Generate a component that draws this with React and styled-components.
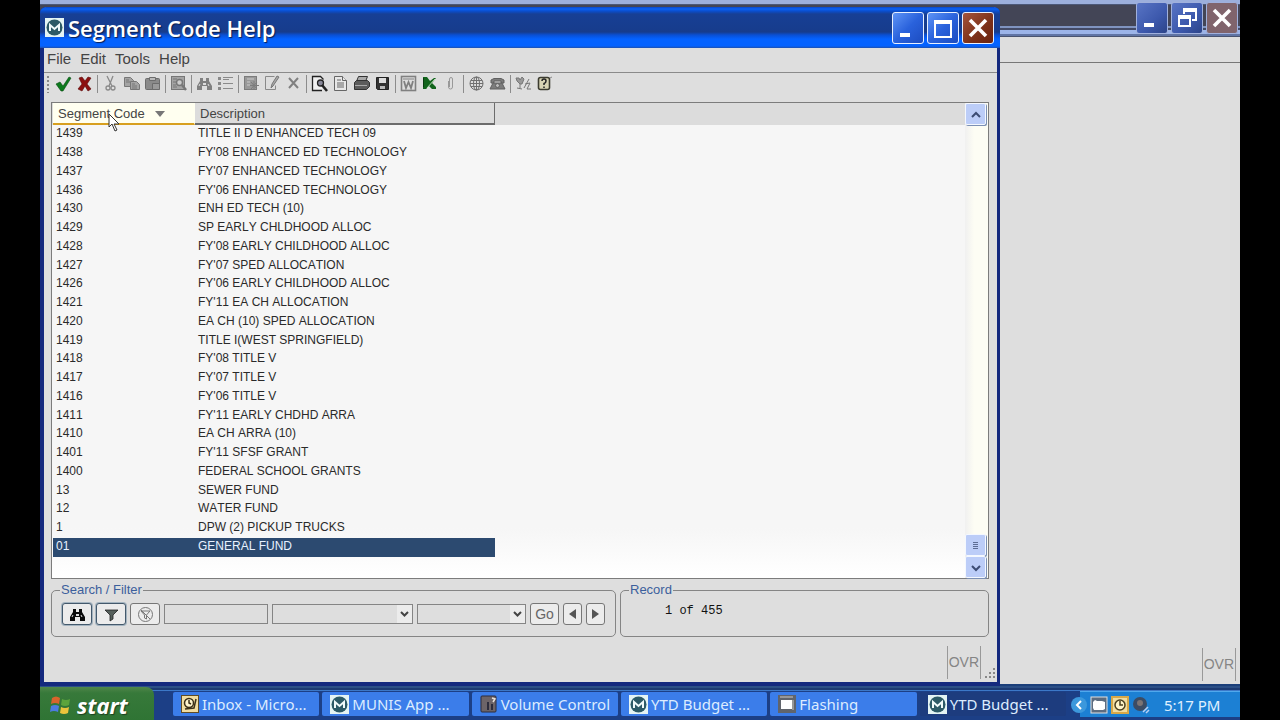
import { useState } from "react";
import styled, { createGlobalStyle } from "styled-components";

const GlobalStyle = createGlobalStyle`
    * {
      box-sizing: border-box;
    }
    body {
      margin: 0;
      background-color: #000;
      font-family: "Liberation Sans", Arial, sans-serif;
      overflow: hidden;
    }
    button, input, select {
      font-family: inherit;
      margin: 0;
      padding: 0;
    }
  `;

const Screen = styled.div`
    height: 100vh;
    margin: 0 40px;
    display: flex;
    flex-direction: column;
    background-color: #1b3f7a;
  `;

const Desktop = styled.main`
    flex: 1;
    min-height: 0;
    position: relative;
  `;

/* window behind the dialog */

const BackWindow = styled.section`
    position: absolute;
    inset: 0 0 2px 0;
    display: flex;
    flex-direction: column;
    background-color: #dedede;
  `;

const BackTitle = styled.header`
    height: 37px;
    display: flex;
    justify-content: flex-end;
    gap: 3px;
    padding: 2px 2px 0 0;
    border-bottom: 1px solid #4a5470;
    background: linear-gradient(#9cafdc 0 4px, #4c5878 4px 5px, #434556 5px 26px, #7f93c0 26px 28px, #434a66 28px 30px, #9cb4e8 30px 34px, #6074a4 34px);
  `;

const BackMenu = styled.div`
    height: 26px;
    border-bottom: 1px solid #777;
  `;

const BackBody = styled.div`
    flex: 1;
    display: flex;
    align-items: flex-end;
    justify-content: flex-end;
    padding: 0 4px 3px 0;
  `;

/* dialog */

const Dialog = styled.section`
    position: absolute;
    top: 7px;
    bottom: 0;
    left: 0;
    width: 80%;
    display: flex;
    flex-direction: column;
    background-color: #dedede;
    border: solid #14297e;
    border-width: 0 3px 4px 4px;
    border-radius: 6px 6px 0 0;
  `;

const DialogTitle = styled.header`
    height: 41px;
    flex: none;
    display: flex;
    align-items: center;
    gap: 4px;
    margin: 0 -3px 0 -4px;
    padding: 0 6px 0 5px;
    border-radius: 6px 6px 0 0;
    background: linear-gradient(#0a46c8 0, #0a62f4 2px, #0a4fd0 4px, #173f95 7px, #173c8c 25px, #0a50d4 28px, #0462ff 32px, #0462ff 39px, #1e4fae 41px);
  `;

const TitleText = styled.h1`
    flex: 1;
    margin: 0;
    font-family: "Open Sans", "Noto Sans", sans-serif;
    font-size: 22px;
    line-height: 30px;
    font-weight: 600;
    color: #fff;
    text-shadow: 1px 1px 1px #0a1e50;
  `;

const WindowButtons = styled.div`
    display: flex;
    gap: 3px;
  `;

const buttonFills = {
  blue: "linear-gradient(135deg, #5e94f6, #2a62dc 50%, #1c4cc0)",
  red: "linear-gradient(135deg, #a4543c, #7c3018 60%, #6a2410)",
  dimBlue: "linear-gradient(135deg, #5874c4, #3c58ac 60%, #2c4488)",
  dimRed: "#80646c",
};

const WindowButton = styled.button`
    width: 32px;
    height: 32px;
    display: flex;
    align-items: center;
    justify-content: center;
    border: 1px solid ${(props) => (props.$dim ? "#a0b0dc" : "#e8f0ff")};
    border-radius: 3px;
    background: ${(props) => buttonFills[props.$fill]};
  `;

const MenuBar = styled.nav`
    height: 25px;
    flex: none;
    display: flex;
    align-items: center;
    gap: 9px;
    padding: 0 0 2px 3px;
    border-bottom: 1px solid #8a8a8a;
  `;

const MenuItem = styled.button`
    border: none;
    background: none;
    font-size: 15px;
    line-height: 20px;
    color: #444;
  `;

const Toolbar = styled.div`
    height: 29px;
    flex: none;
    display: flex;
    align-items: flex-start;
    gap: 4px;
    padding: 2px 0 0 2px;
  `;

const Tool = styled.button`
    width: 17px;
    height: 17px;
    display: flex;
    border: none;
    background: none;
  `;

const Separator = styled.span`
    width: 1px;
    height: 18px;
    background-color: #8c8c8c;
  `;

const Grip = styled.span`
    width: 5px;
    height: 18px;
    background: radial-gradient(circle, #888 1px, transparent 1px) 0 0 / 4px 4px;
  `;

const Frame = styled.div`
    flex: 1;
    min-height: 0;
    display: flex;
    margin: 0 8px 0 7px;
    border: 1px solid #7c7c7c;
    background: linear-gradient(#dcdcdc 0 22px, #f6f6f6 22px calc(100% - 50px), #fff 100%);
  `;

const TableArea = styled.div`
    flex: 1;
    padding-left: 1px;
  `;

const Table = styled.table`
    width: 442px;
    table-layout: fixed;
    border-collapse: separate;
    border-spacing: 0;
  `;

const HeadCell = styled.th`
    width: ${(props) => props.$width};
    height: 22px;
    padding: 2px 0 0 5px;
    text-align: left;
    background-color: ${(props) => (props.$sorted ? "#fffff0" : "#dcdcdc")};
    border-bottom: 2px solid ${(props) => (props.$sorted ? "#d8a020" : "#6c6c6c")};
    border-right: 1px solid ${(props) => (props.$sorted ? "#fffff0" : "#6c6c6c")};
  `;

const SortButton = styled.button`
    display: flex;
    align-items: center;
    gap: 10px;
    border: none;
    background: none;
    font-size: 13px;
    line-height: 18px;
    font-kerning: none;
    color: #444;
  `;

const Row = styled.tr`
    color: ${(props) => (props.$selected ? "#e8f2ff" : "#2a2a2a")};
    background-color: ${(props) => (props.$selected ? "#2c4a70" : "transparent")};
    &:nth-child(4n) td {
      height: 18px;
    }
  `;

const Cell = styled.td`
    height: 19px;
    padding: 0 0 0 3px;
    vertical-align: top;
    font-size: 12px;
    line-height: 17px;
    font-kerning: none;
    white-space: nowrap;
  `;

const ScrollBar = styled.div`
    width: 23px;
    display: flex;
    flex-direction: column;
    background: linear-gradient(90deg, #f0f0f0, #fdfdf4 40%, #fdfdf4);
  `;

const ScrollTrack = styled.div`
    flex: 1;
  `;

const ScrollButton = styled.button`
    width: 21px;
    height: 22px;
    display: flex;
    align-items: center;
    justify-content: center;
    border: 1px solid #f4f8ff;
    border-radius: 2px;
    background-color: #bccdf8;
    box-shadow: 1px 1px 0 #7c90b4;
  `;

const Groups = styled.div`
    display: flex;
    gap: 4px;
    margin: 4px 8px 0 7px;
  `;

const Group = styled.fieldset`
    flex: ${(props) => (props.$grow ? "1" : "0 0 565px")};
    min-width: 0;
    height: 54px;
    margin: 0;
    padding: 0 10px;
    border: 1px solid #858585;
    border-radius: 5px;
  `;

const Legend = styled.legend`
    margin-left: -2px;
    padding: 0 1px;
    font-size: 13px;
    line-height: 14px;
    color: #3c5f9c;
  `;

const Controls = styled.div`
    display: flex;
    align-items: center;
    gap: 4px;
    height: 34px;
  `;

const PushButton = styled.button`
    width: ${(props) => props.$width};
    height: 22px;
    display: flex;
    align-items: center;
    justify-content: center;
    border: 1px solid ${(props) => (props.$strong ? "#44596c" : "#777")};
    border-radius: 3px;
    background-color: #ececec;
    box-shadow: ${(props) => (props.$strong ? "0 0 0 1px #a4b4c0" : "none")};
    font-size: 14px;
    color: #666;
  `;

const TextBox = styled.input`
    width: 104px;
    height: 20px;
    border: 1px solid #858585;
    background-color: #dedede;
  `;

const SelectWrap = styled.label`
    width: ${(props) => props.$width};
    height: 20px;
    display: flex;
    border: 1px solid #858585;
    background: linear-gradient(90deg, transparent calc(100% - 15px), #ececec 0);
  `;

const Select = styled.select`
    width: 100%;
    appearance: none;
    border: none;
    background: url("data:image/svg+xml,%3Csvg xmlns='http://www.w3.org/2000/svg' width='9' height='6'%3E%3Cpath d='M1 1l3.500 3.500L8 1' fill='none' stroke='%23444' stroke-width='2'/%3E%3C/svg%3E") no-repeat right 3px center;
  `;

const RecordText = styled.output`
    display: block;
    padding-left: 34px;
    font-family: "Liberation Mono", "Courier New", monospace;
    font-size: 12px;
    line-height: 28px;
    color: #111;
  `;

const StatusBar = styled.footer`
    height: 45px;
    flex: none;
    display: flex;
    align-items: flex-end;
    justify-content: flex-end;
    gap: 3px;
    padding: 0 1px 3px 0;
  `;

const StatusCell = styled.span`
    height: 33px;
    padding: 0 1px;
    border: solid #999;
    border-width: 0 1px;
    font-size: 14px;
    line-height: 33px;
    color: #858585;
  `;

const Pointer = styled.svg`
    position: absolute;
    left: 68px;
    top: 113px;
    pointer-events: none;
  `;

/* task bar */

const TaskBar = styled.footer`
    height: 34px;
    flex: none;
    display: flex;
    align-items: stretch;
    background: linear-gradient(#2b4f86 0 2px, #1c3a72 2px 4px, #3c78c8 4px 5px, #1c3f86 5px);
  `;

const StartButton = styled.button`
    width: 114px;
    display: flex;
    align-items: center;
    gap: 5px;
    margin-top: 1px;
    padding: 3px 0 0 9px;
    border: none;
    border-radius: 0 8px 0 0;
    background: linear-gradient(#50864a, #37793a 6px, #2f7434);
    font-family: "Open Sans", "Noto Sans", sans-serif;
    font-size: 22px;
    line-height: 30px;
    font-weight: 700;
    font-style: italic;
    color: #fff;
    text-shadow: 1px 1px 1px #1c4020;
  `;

const TaskList = styled.div`
    flex: 1;
    min-width: 0;
    display: flex;
    gap: 3px;
    padding: 6px 14px 4px 19px;
  `;

const Task = styled.button`
    flex: 1;
    min-width: 0;
    display: flex;
    align-items: center;
    gap: 3px;
    padding-left: 8px;
    border: none;
    border-radius: 2px;
    background-color: ${(props) => (props.$active ? "#1d3c7e" : "#3b7dea")};
    font-family: "Noto Sans", "Open Sans", sans-serif;
    font-size: 15px;
    line-height: 22px;
    white-space: nowrap;
    color: #dcecff;
  `;

const Tray = styled.div`
    width: 160px;
    display: flex;
    align-items: center;
    gap: 3px;
    margin: 5px 0 3px;
    background-color: #1c80d4;
    border-top: 1px solid #50a8ec;
  `;

const TrayArrow = styled.button`
    width: 16px;
    height: 16px;
    display: flex;
    align-items: center;
    justify-content: center;
    margin-left: -9px;
    border: none;
    border-radius: 50%;
    background-color: #3c98dc;
  `;

const Clock = styled.time`
    margin-left: 11px;
    font-family: "Noto Sans", "Open Sans", sans-serif;
    font-size: 15px;
    line-height: 22px;
    color: #e0f0ff;
  `;

const segments = [
  ["1439", "TITLE II D ENHANCED TECH 09"],
  ["1438", "FY'08 ENHANCED ED TECHNOLOGY"],
  ["1437", "FY'07 ENHANCED TECHNOLOGY"],
  ["1436", "FY'06 ENHANCED TECHNOLOGY"],
  ["1430", "ENH ED TECH (10)"],
  ["1429", "SP EARLY CHLDHOOD ALLOC"],
  ["1428", "FY'08 EARLY CHILDHOOD ALLOC"],
  ["1427", "FY'07 SPED ALLOCATION"],
  ["1426", "FY'06 EARLY CHILDHOOD ALLOC"],
  ["1421", "FY'11 EA CH ALLOCATION"],
  ["1420", "EA CH (10) SPED ALLOCATION"],
  ["1419", "TITLE I(WEST SPRINGFIELD)"],
  ["1418", "FY'08 TITLE V"],
  ["1417", "FY'07 TITLE V"],
  ["1416", "FY'06 TITLE V"],
  ["1411", "FY'11 EARLY CHDHD ARRA"],
  ["1410", "EA CH ARRA (10)"],
  ["1401", "FY'11 SFSF GRANT"],
  ["1400", "FEDERAL SCHOOL GRANTS"],
  ["13", "SEWER FUND"],
  ["12", "WATER FUND"],
  ["1", "DPW (2) PICKUP TRUCKS"],
  ["01", "GENERAL FUND"],
];

const Binoculars = ({ color }) => (
  <g fill={color}>
    <path d="M4 3h3v3h3V3h3v3l3 5v4h-5v-4H6v4H1v-4l3-5z" />
    <path d="M7 8h3v2H7z" fill="#ddd" />
    <path d="M3 11l1-2M13 11l-1-2" stroke="#ddd" />
  </g>
);

const icons = {
  accept: <path d="M1 9l4-2 3 4 6-9 2 1-8 13H6z" fill="#0c7a1c" stroke="#064a10" strokeWidth=".6" />,
  cancel: <path d="M3 3l3-1 3 4 3-4 3 1-4 6 4 5-3 2-3-5-3 5-4-2 4-5z" fill="#8c1010" stroke="#5a0606" strokeWidth=".6" />,
  cut: (
    <g fill="none" stroke="#8a8a8a" strokeWidth="1.3">
      <path d="M5 1l5 10M11 1L7 11" />
      <circle cx="6" cy="13" r="2" />
      <circle cx="11" cy="13" r="2" />
    </g>
  ),
  copy: (
    <g fill="#a4a4a4" stroke="#777">
      <path d="M1.500 2.500h6l3 3v6h-9z" />
      <path d="M7.500 6.500h6l3 3v5h-9z" />
      <path d="M3 5h3M3 7h4M9 9h3M9 11h5M9 13h5" />
    </g>
  ),
  paste: (
    <g fill="#8a8a8a" stroke="#6c6c6c">
      <rect x="1.500" y="3.500" width="14" height="11" rx="1" />
      <path d="M5.500 2.500h6v3h-6z" fill="#bbb" />
      <path d="M8.500 8.500h7v6h-7z" fill="#999" />
    </g>
  ),
  docFind: (
    <g stroke="#777" fill="none">
      <rect x="1.500" y="1.500" width="13" height="13" fill="#a4a4a4" />
      <path d="M3 4h4M3 7h3M3 10h3M3 12h4" />
      <circle cx="9.500" cy="7.500" r="3" fill="#ccc" strokeWidth="1.500" />
      <path d="M12 10l4 5" strokeWidth="2.400" />
    </g>
  ),
  find: <Binoculars color="#808080" />,
  list: (
    <g fill="none" stroke="#8a8a8a">
      <path d="M1 3.500h4M1 8.500h4M1 13.500h4" strokeWidth="3" strokeDasharray="3 1" />
      <path d="M6 2.500h10M6 4.500h6M6 8.500h10M6 13.500h10" />
    </g>
  ),
  add: (
    <g stroke="#7c7c7c">
      <rect x="1.500" y="1.500" width="12" height="13" fill="#999" />
      <path d="M4 4h7M4 7h3M4 10h3" stroke="#ccc" />
      <path d="M11 6v9M7 10.500h9M8 7l6 7M14 7l-6 7" />
    </g>
  ),
  edit: (
    <g fill="none" stroke="#8a8a8a">
      <path d="M10.500 1.500h-9v13h10v-4" />
      <path d="M15 2l-6 9-2 2 1-4 5-8z" fill="#aaa" stroke="#777" />
    </g>
  ),
  remove: <path d="M4 3l9 10M13 3L4 13" stroke="#808080" strokeWidth="2" fill="none" />,
  preview: (
    <g fill="none" stroke="#222" strokeWidth="1.300">
      <path d="M11 15.500H1.500v-14h8l3 3" fill="#f0f0f0" />
      <circle cx="9.500" cy="8" r="3" fill="#889" />
      <path d="M11 10l5 6" strokeWidth="2.600" />
    </g>
  ),
  document: (
    <g fill="#e8e8e8" stroke="#666">
      <path d="M2.500 1.500h8l4 4v10h-12z" />
      <path d="M10.500 1.500v4h4M5 5h4M5 8h7M5 10h7M5 12h7" />
    </g>
  ),
  print: (
    <g fill="#5c5c5c" stroke="#333">
      <path d="M5.500 1.500h9l-2 5h-9z" fill="#aaa" />
      <path d="M1.500 7.500l2-2h11l2 2v4l-3 3h-12z" />
      <path d="M2 10.500h12M5 4h6" stroke="#aaa" />
    </g>
  ),
  save: (
    <g stroke="#222">
      <path d="M2.500 2.500h12v12h-11l-1-1z" fill="#333" />
      <path d="M5 3h7v5H5z" fill="#ddd" stroke="none" />
      <path d="M6 11h5v3H6z" fill="#bbb" stroke="none" />
    </g>
  ),
  word: (
    <g fill="none" stroke="#808080">
      <rect x="1.500" y="1.500" width="14" height="14" strokeWidth="1.600" />
      <path d="M3 4h11" />
      <path d="M4 6l2 7 2.500-6L11 13l2-7" strokeWidth="1.800" />
    </g>
  ),
  excel: (
    <g>
      <path d="M2 2h4l3 4 4-3h2L11 8l4 4v2h-4l-3-3-3 3H2z" fill="#12641c" />
      <path d="M6 13l8-9" stroke="#b4dcb4" strokeWidth="1" fill="none" />
      <path d="M2.500 3v9" stroke="#083c10" />
    </g>
  ),
  clip: <path d="M6.500 6v6a2 2 0 004 0V4a1.500 1.500 0 00-3 0v8" stroke="#999" fill="none" />,
  web: (
    <g fill="none" stroke="#707070">
      <circle cx="8.500" cy="8.500" r="6.500" />
      <ellipse cx="8.500" cy="8.500" rx="3" ry="6.500" />
      <path d="M2 8.500h13M3 5.500h11M3 11.500h11M8.500 2v13" />
    </g>
  ),
  phone: (
    <g fill="#7c7c7c" stroke="#606060">
      <path d="M2 8V5l3-1.500h7L15 5v3h-3V6H5v2z" />
      <path d="M4 8h9l3 6H1z" />
      <circle cx="8.500" cy="10.500" r="2" fill="#bbb" />
    </g>
  ),
  wizard: (
    <g fill="none" stroke="#777">
      <path d="M1 3h3l1 2 2-3 2 2-2 5H5L2 6z" fill="#999" />
      <path d="M5 9v4M2 13l5 1M14 4l-5 9M10 9l5-1-3 6h4" />
    </g>
  ),
  help: (
    <g>
      <rect x="2.500" y="2.500" width="11" height="12" rx="2" fill="#d8d4b4" stroke="#3c3c30" strokeWidth="1.600" />
      <path d="M6 6q0-2 2-2t2 2q0 2-2 2.500V10M8 11.500V13" fill="none" stroke="#222" strokeWidth="1.500" />
      <path d="M14 3l2-1" stroke="#888" />
    </g>
  ),
  funnel: <path d="M2 4h13l-5 5v4l-3 2V9z" fill="#56605c" stroke="#222" strokeWidth=".8" />,
  noFunnel: (
    <g fill="none" stroke="#777">
      <circle cx="8.500" cy="8.500" r="7" />
      <path d="M4 5h9l-3.500 4v4l-2-1V9zM4 4l9 9" />
    </g>
  ),
  bin: <Binoculars color="#0c0c0c" />,
};

const Icon = ({ name }) => (
  <svg width="17" height="17" viewBox="0 0 17 17" aria-hidden="true">
    {icons[name]}
  </svg>
);

const tools = [
  ["accept", "cancel"],
  ["cut", "copy", "paste"],
  ["docFind"],
  ["find", "list"],
  ["add", "edit", "remove"],
  ["preview", "document", "print", "save"],
  ["word", "excel", "clip"],
  ["web", "phone"],
  ["wizard", "help"],
];

const MunisLogo = () => (
  <svg width="19" height="19" viewBox="0 0 19 19" aria-hidden="true">
    <rect width="19" height="19" fill="#e4f4f4" />
    <circle cx="9.500" cy="9.500" r="8" fill="#2c5a66" />
    <path d="M5 13V7l4.500 4L14 7v6" fill="none" stroke="#f0fafa" strokeWidth="2" />
  </svg>
);

const MailIcon = () => (
  <svg width="18" height="18" viewBox="0 0 18 18" aria-hidden="true">
    <rect x=".5" y=".5" width="17" height="17" fill="#f0dca0" stroke="#604c24" />
    <circle cx="8" cy="8" r="4.500" fill="#fff4cc" stroke="#3c3018" strokeWidth="1.500" />
    <path d="M8 5v3l2 1M4 14l9-1 2-9" fill="none" stroke="#3c3018" strokeWidth="1.500" />
  </svg>
);

const SpeakerIcon = () => (
  <svg width="18" height="18" viewBox="0 0 18 18" aria-hidden="true">
    <rect x="1" y="1" width="15" height="16" rx="1" fill="#6c6468" stroke="#2c2c3c" />
    <path d="M7 7h2v8H7zM11 9h2v6h-2z" fill="#2c2c3c" />
    <path d="M12 3l3 1-2 3" fill="none" stroke="#e8e0d8" strokeWidth="1.500" />
  </svg>
);

const FlashIcon = () => (
  <svg width="18" height="18" viewBox="0 0 18 18" aria-hidden="true">
    <rect width="18" height="18" fill="#60646c" />
    <path d="M3 5h11v9H3z" fill="#fff" />
    <path d="M2 2h13M15 5v10" stroke="#a8a8a8" strokeWidth="1.500" />
  </svg>
);

const FlagIcon = () => (
  <svg width="23" height="22" viewBox="0 0 23 22" aria-hidden="true">
    <path d="M3 4q4-3 8 0l-1 6q-4-2-8 0z" fill="#d8642c" />
    <path d="M13 5q4 2 8 0l-1 6q-4 2-8 0z" fill="#5ca43c" />
    <path d="M2 12q4-2 8 0l-1 6q-4-2-8 0z" fill="#4c7ce0" />
    <path d="M12 13q4 2 8 0l-1 6q-4 2-8 0z" fill="#ecc43c" />
  </svg>
);

const tasks = [
  ["Inbox - Micro...", MailIcon],
  ["MUNIS App ...", MunisLogo],
  ["Volume Control", SpeakerIcon],
  ["YTD Budget ...", MunisLogo],
  ["Flashing", FlashIcon],
  ["YTD Budget ...", MunisLogo],
];

const glyphs = {
  minimize: <path d="M8 21h10v4H8z" fill="#fff" />,
  maximize: <path d="M7 8h18v18H7zM9 12v12h14V12z" fill="#fff" fillRule="evenodd" />,
  restore: <path d="M12 6h14v13h-5v-2h3v-7H14v2h-2zM7 13h13v12H7zM9 17v6h9v-6z" fill="#fff" fillRule="evenodd" />,
  close: <path d="M8 8l16 16M24 8L8 24" stroke="#fff" strokeWidth="3.600" />,
};

const WinButton = ({ glyph, fill, dim }) => (
  <WindowButton type="button" aria-label={glyph} $fill={fill} $dim={dim}>
    <svg width="30" height="30" viewBox="1 1 30 30">
      {glyphs[glyph]}
    </svg>
  </WindowButton>
);

const Chevron = ({ d }) => (
  <svg width="11" height="11" viewBox="0 0 11 11">
    <path d={d} fill="none" stroke="#3c4c74" strokeWidth="2" />
  </svg>
);

const App = () => {
  const [selected, setSelected] = useState("01");

  return (
    <Screen>
      <GlobalStyle />
      <Desktop>
        <BackWindow>
          <BackTitle>
            <WinButton glyph="minimize" fill="dimBlue" dim />
            <WinButton glyph="restore" fill="dimBlue" dim />
            <WinButton glyph="close" fill="dimRed" dim />
          </BackTitle>
          <BackMenu />
          <BackBody>
            <StatusCell>OVR</StatusCell>
          </BackBody>
        </BackWindow>

        <Dialog>
          <DialogTitle>
            <MunisLogo />
            <TitleText>Segment Code Help</TitleText>
            <WindowButtons>
              <WinButton glyph="minimize" fill="blue" />
              <WinButton glyph="maximize" fill="blue" />
              <WinButton glyph="close" fill="red" />
            </WindowButtons>
          </DialogTitle>

          <MenuBar>
            {["File", "Edit", "Tools", "Help"].map((item) => (
              <MenuItem key={item} type="button">{item}</MenuItem>
            ))}
          </MenuBar>

          <Toolbar>
            <Grip />
            {tools.map((group, i) => [
              i > 0 && <Separator key={i} />,
              ...group.map((name) => (
                <Tool key={name} type="button" aria-label={name}>
                  <Icon name={name} />
                </Tool>
              )),
            ])}
          </Toolbar>

          <Frame>
            <TableArea>
              <Table>
                <thead>
                  <tr>
                    <HeadCell $width="142px" $sorted>
                      <SortButton type="button">
                        Segment Code
                        <svg width="10" height="6"><path d="M0 0h10L5 6z" fill="#777" /></svg>
                      </SortButton>
                    </HeadCell>
                    <HeadCell $width="300px">
                      <SortButton type="button">Description</SortButton>
                    </HeadCell>
                  </tr>
                </thead>
                <tbody>
                  {segments.map(([code, description]) => (
                    <Row key={code} $selected={code === selected} onClick={() => setSelected(code)}>
                      <Cell>{code}</Cell>
                      <Cell>{description}</Cell>
                    </Row>
                  ))}
                </tbody>
              </Table>
            </TableArea>
            <ScrollBar>
              <ScrollButton type="button" aria-label="Scroll up">
                <Chevron d="M2 8l4-4 4 4" />
              </ScrollButton>
              <ScrollTrack />
              <ScrollButton type="button" aria-label="Scroll position">
                <svg width="7" height="9"><path d="M1 1.500h5M1 3.500h5M1 5.500h5M1 7.500h5" stroke="#5c6c94" /></svg>
              </ScrollButton>
              <ScrollButton type="button" aria-label="Scroll down">
                <Chevron d="M2 4l4 4 4-4" />
              </ScrollButton>
            </ScrollBar>
          </Frame>

          <Groups>
            <Group>
              <Legend>Search / Filter</Legend>
              <Controls>
                <PushButton type="button" aria-label="Search" $width="30px" $strong><Icon name="bin" /></PushButton>
                <PushButton type="button" aria-label="Filter" $width="30px" $strong><Icon name="funnel" /></PushButton>
                <PushButton type="button" aria-label="Clear filter" $width="30px"><Icon name="noFunnel" /></PushButton>
                <TextBox type="text" aria-label="Search text" />
                <SelectWrap $width="141px"><Select aria-label="Field"><option /></Select></SelectWrap>
                <SelectWrap $width="109px"><Select aria-label="Condition"><option /></Select></SelectWrap>
                <PushButton type="button" $width="29px">Go</PushButton>
                <PushButton type="button" aria-label="Previous" $width="19px">
                  <svg width="7" height="10"><path d="M7 0v10L0 5z" fill="#555" /></svg>
                </PushButton>
                <PushButton type="button" aria-label="Next" $width="19px">
                  <svg width="7" height="10"><path d="M0 0v10l7-5z" fill="#555" /></svg>
                </PushButton>
              </Controls>
            </Group>
            <Group $grow>
              <Legend>Record</Legend>
              <RecordText>1 of 455</RecordText>
            </Group>
          </Groups>

          <StatusBar>
            <StatusCell>OVR</StatusCell>
            <svg width="12" height="12">
              <path d="M9 1h2v2H9zM5 5h2v2H5zM9 5h2v2H9zM1 9h2v2H1zM5 9h2v2H5zM9 9h2v2H9z" fill="#888" />
            </svg>
          </StatusBar>
        </Dialog>

        <Pointer width="12" height="19" viewBox="0 0 12 19">
          <path d="M1 1v13l3-3 3 7 2-1-3-6h5z" fill="#fff" stroke="#333" />
        </Pointer>
      </Desktop>

      <TaskBar>
        <StartButton type="button">
          <FlagIcon />
          start
        </StartButton>
        <TaskList>
          {tasks.map(([label, Logo], i) => (
            <Task key={i} type="button" $active={i === tasks.length - 1}>
              <Logo />
              {label}
            </Task>
          ))}
        </TaskList>
        <Tray>
          <TrayArrow type="button" aria-label="Show hidden icons">
            <svg width="8" height="10"><path d="M6 1L2 5l4 4" fill="none" stroke="#fff" strokeWidth="2" /></svg>
          </TrayArrow>
          <svg width="18" height="18" viewBox="0 0 18 18">
            <rect x="1" y="1" width="16" height="16" fill="#5c6c80" stroke="#e0e0e0" />
            <path d="M3 6l2-2 2 1h5l3 1v7l-2 1H4l-1-2z" fill="#fff" />
          </svg>
          <svg width="18" height="18" viewBox="0 0 18 18">
            <rect x="1" y="1" width="16" height="16" fill="#f0dca0" stroke="#d8a848" strokeWidth="2" />
            <circle cx="9" cy="9" r="5" fill="#fff4c8" stroke="#4c4020" strokeWidth="1.500" />
            <path d="M9 5v4h3" fill="none" stroke="#4c4020" strokeWidth="1.500" />
          </svg>
          <svg width="18" height="18" viewBox="0 0 18 18">
            <circle cx="8" cy="8" r="7" fill="#3c4c64" />
            <circle cx="8" cy="7" r="3" fill="#7c7474" />
            <path d="M11 16l5-5M14 17l3-3" stroke="#b8d0f4" strokeWidth="1.500" />
          </svg>
          <Clock>5:17 PM</Clock>
        </Tray>
      </TaskBar>
    </Screen>
  );
};

export default App;
